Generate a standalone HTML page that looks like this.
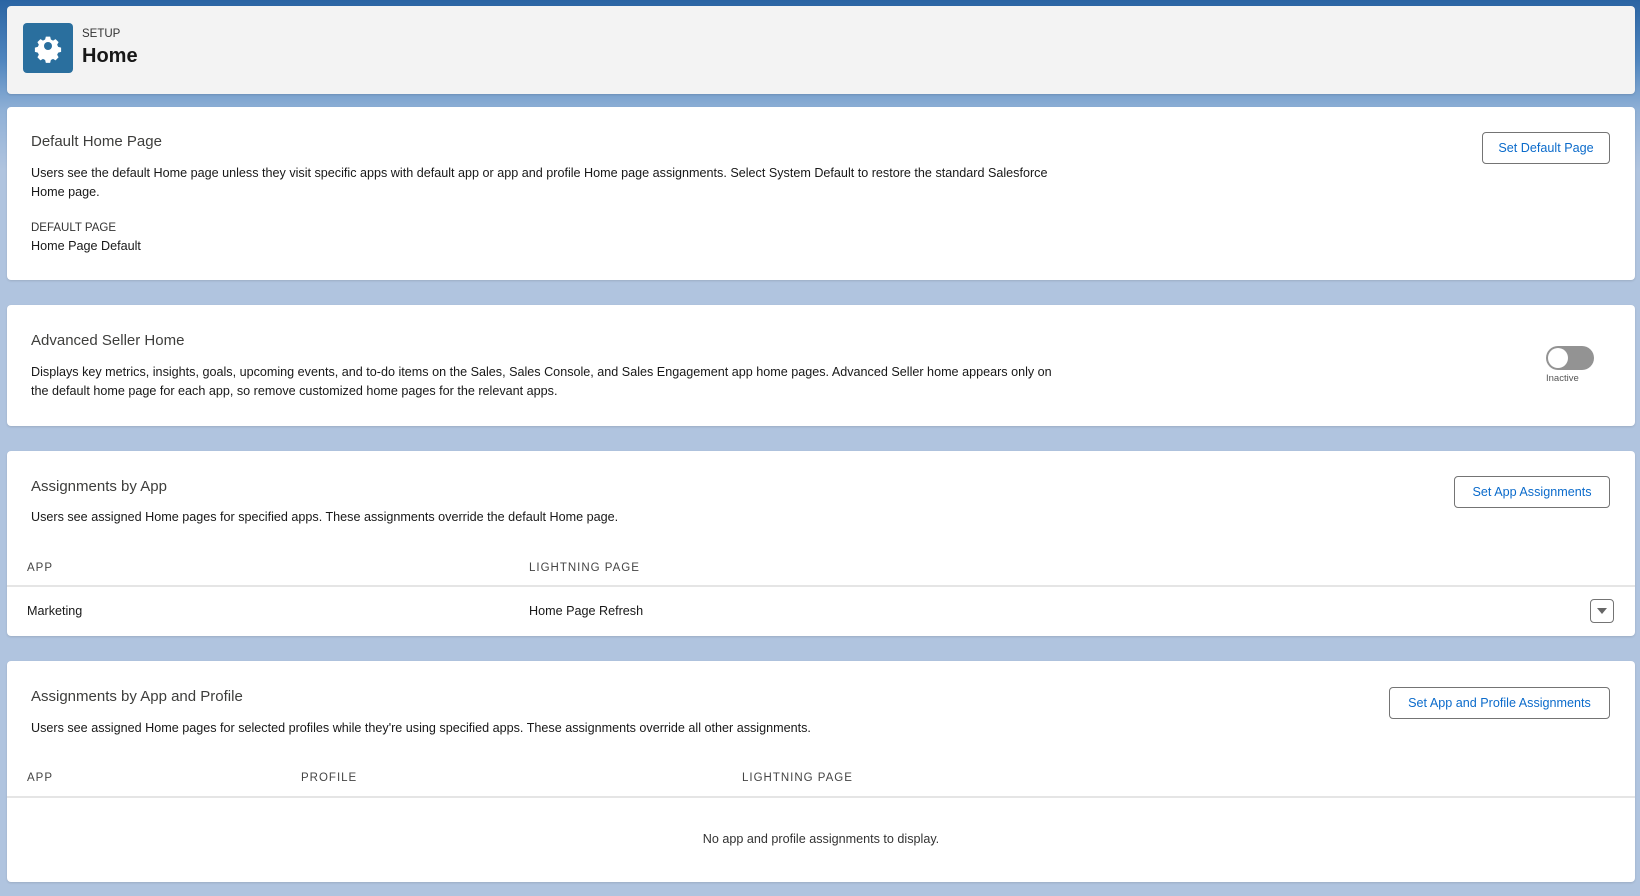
<!DOCTYPE html>
<html><head><style>
*{box-sizing:border-box;margin:0;padding:0}
body{width:1640px;height:896px;overflow:hidden;font-family:"Liberation Sans",sans-serif;color:#181818;background:linear-gradient(#2a64a3 0px,#4f85be 60px,#8fb0d6 110px,#b0c4df 170px,#b0c4df 896px);position:relative}
.card{position:absolute;left:7px;width:1628px;background:#fff;border-radius:4px;box-shadow:0 1px 2px rgba(0,0,0,.12)}
.t{position:absolute;left:24px;font-size:15px;color:#3e3e3c;font-weight:300}
.d{position:absolute;left:24px;font-size:12.6px;line-height:19px;color:#181818}
.btn{position:absolute;border:1px solid #747474;border-radius:4px;color:#0b6bcb;font-size:12.6px;text-align:center;background:#fff}
.th{position:absolute;font-size:11.5px;letter-spacing:1px;color:#444}
.line{position:absolute;left:0;right:0;height:2px;background:#e5e5e5}
.c{position:absolute;font-size:12.6px}
</style></head><body>
<div class="card" style="top:6px;height:88px;background:#f3f3f3">
 <div style="position:absolute;left:16px;top:17px;width:50px;height:50px;background:#2a6f9e;border-radius:4px">
  <svg width="50" height="50" viewBox="0 0 50 50"><g fill="#fff" transform="translate(25 25)">
   <path d="M-3,-13h6l1,4 3,1.5 3.5,-2 4.2,4.2 -2,3.5 1.5,3 4,1v6l-4,1 -1.5,3 2,3.5 -4.2,4.2 -3.5,-2 -3,1.5 -1,4h-6l-1,-4 -3,-1.5 -3.5,2 -4.2,-4.2 2,-3.5 -1.5,-3 -4,-1v-6l4,-1 1.5,-3 -2,-3.5 4.2,-4.2 3.5,2 3,-1.5z" transform="translate(0 -2) scale(0.72)"/>
   <circle cy="-2" r="4" fill="#2a6f9e"/></g></svg>
 </div>
 <div style="position:absolute;left:75px;top:22px;font-size:11.5px;color:#333">SETUP</div>
 <div style="position:absolute;left:75px;top:39px;font-size:20px;font-weight:bold">Home</div>
</div>

<div class="card" style="top:107px;height:173px">
 <div class="t" style="top:26px">Default Home Page</div>
 <div class="d" style="top:57px;width:1035px">Users see the default Home page unless they visit specific apps with default app or app and profile Home page assignments. Select System Default to restore the standard Salesforce Home page.</div>
 <div class="d" style="top:112px;font-size:11.5px;color:#333">DEFAULT PAGE</div>
 <div class="d" style="top:130px">Home Page Default</div>
 <div class="btn" style="left:1475px;top:25px;width:128px;height:32px;line-height:30px">Set Default Page</div>
</div>

<div class="card" style="top:305px;height:121px">
 <div class="t" style="top:27px">Advanced Seller Home</div>
 <div class="d" style="top:58px;width:1040px">Displays key metrics, insights, goals, upcoming events, and to-do items on the Sales, Sales Console, and Sales Engagement app home pages. Advanced Seller home appears only on the default home page for each app, so remove customized home pages for the relevant apps.</div>
 <div style="position:absolute;left:1539px;top:41px;width:48px;height:24px;border-radius:12px;background:#939393"><div style="position:absolute;left:2px;top:2px;width:20px;height:20px;border-radius:50%;background:#fff"></div></div>
 <div style="position:absolute;left:1539px;top:68px;font-size:9.5px;color:#555">Inactive</div>
</div>

<div class="card" style="top:451px;height:185px">
 <div class="t" style="top:27px">Assignments by App</div>
 <div class="d" style="top:57px">Users see assigned Home pages for specified apps. These assignments override the default Home page.</div>
 <div class="btn" style="left:1447px;top:25px;width:156px;height:32px;line-height:30px">Set App Assignments</div>
 <div class="th" style="left:20px;top:111px">APP</div>
 <div class="th" style="left:522px;top:111px">LIGHTNING PAGE</div>
 <div class="line" style="top:134px"></div>
 <div class="c" style="left:20px;top:153px">Marketing</div>
 <div class="c" style="left:522px;top:153px">Home Page Refresh</div>
 <div style="position:absolute;left:1583px;top:148px;width:24px;height:24px;border:1px solid #747474;border-radius:4px"><div style="position:absolute;left:6px;top:8px;border-left:5px solid transparent;border-right:5px solid transparent;border-top:6px solid #666"></div></div>
</div>

<div class="card" style="top:661px;height:221px">
 <div class="t" style="top:27px">Assignments by App and Profile</div>
 <div class="d" style="top:58px">Users see assigned Home pages for selected profiles while they're using specified apps. These assignments override all other assignments.</div>
 <div class="btn" style="left:1382px;top:26px;width:221px;height:32px;line-height:30px">Set App and Profile Assignments</div>
 <div class="th" style="left:20px;top:111px">APP</div>
 <div class="th" style="left:294px;top:111px">PROFILE</div>
 <div class="th" style="left:735px;top:111px">LIGHTNING PAGE</div>
 <div class="line" style="top:135px"></div>
 <div class="c" style="left:0;right:0;text-align:center;top:171px;color:#333">No app and profile assignments to display.</div>
</div>
</body></html>
